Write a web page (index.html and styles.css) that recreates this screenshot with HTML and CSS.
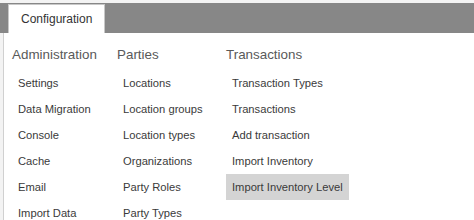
FILE: index.html
```html
<!DOCTYPE html>
<html lang="en">
<head>
    <meta charset="UTF-8">
    <title>Configuration</title>
    <link rel="stylesheet" href="styles.css">
</head>
<body>
    <header class="topbar">
        <div class="tab">Configuration</div>
    </header>
    <nav class="menu">
        <div class="menu-col col-admin">
            <h2>Administration</h2>
            <ul>
                <li>Settings</li>
                <li>Data Migration</li>
                <li>Console</li>
                <li>Cache</li>
                <li>Email</li>
                <li>Import Data</li>
            </ul>
        </div>
        <div class="menu-col col-parties">
            <h2>Parties</h2>
            <ul>
                <li>Locations</li>
                <li>Location groups</li>
                <li>Location types</li>
                <li>Organizations</li>
                <li>Party Roles</li>
                <li>Party Types</li>
            </ul>
        </div>
        <div class="menu-col">
            <h2>Transactions</h2>
            <ul>
                <li>Transaction Types</li>
                <li>Transactions</li>
                <li>Add transaction</li>
                <li>Import Inventory</li>
                <li class="active">Import Inventory Level</li>
            </ul>
        </div>
    </nav>
</body>
</html>
```

FILE: styles.css
```css
body {
    margin: 0;
    padding: 0;
    background-color: #f3f3f3;
    font-family: "Liberation Sans", Arial, sans-serif;
    overflow: hidden;
}

.topbar {
    margin-top: 3px;
    height: 30px;
    background-color: #878787;
    padding-left: 8px;
    display: flex;
    align-items: flex-end;
}

.tab {
    height: 28px;
    line-height: 28px;
    padding: 0 12px;
    background-color: #fff;
    border: 1px solid #c8c8c8;
    border-bottom: none;
    font-size: 12px;
    color: #333;
}

.menu {
    display: flex;
    margin-left: 3px;
    border-left: 1px solid #d0d0d0;
    padding-left: 8px;
    background-color: #fff;
    height: 187px;
    overflow: hidden;
}

.menu-col h2 {
    margin: 12px 0 5px;
    font-size: 13.4px;
    font-weight: normal;
    line-height: 20px;
    color: #595959;
}

.col-admin {
    width: 105px;
}

.col-parties {
    width: 109px;
}

.menu-col ul {
    list-style: none;
    margin: 0;
    padding: 0;
}

.menu-col li {
    width: fit-content;
    height: 26px;
    line-height: 26px;
    padding: 0 6px;
    font-size: 11.2px;
    color: #3a3a3a;
    white-space: nowrap;
}

.menu-col li.active {
    background-color: #d4d4d4;
}
```
